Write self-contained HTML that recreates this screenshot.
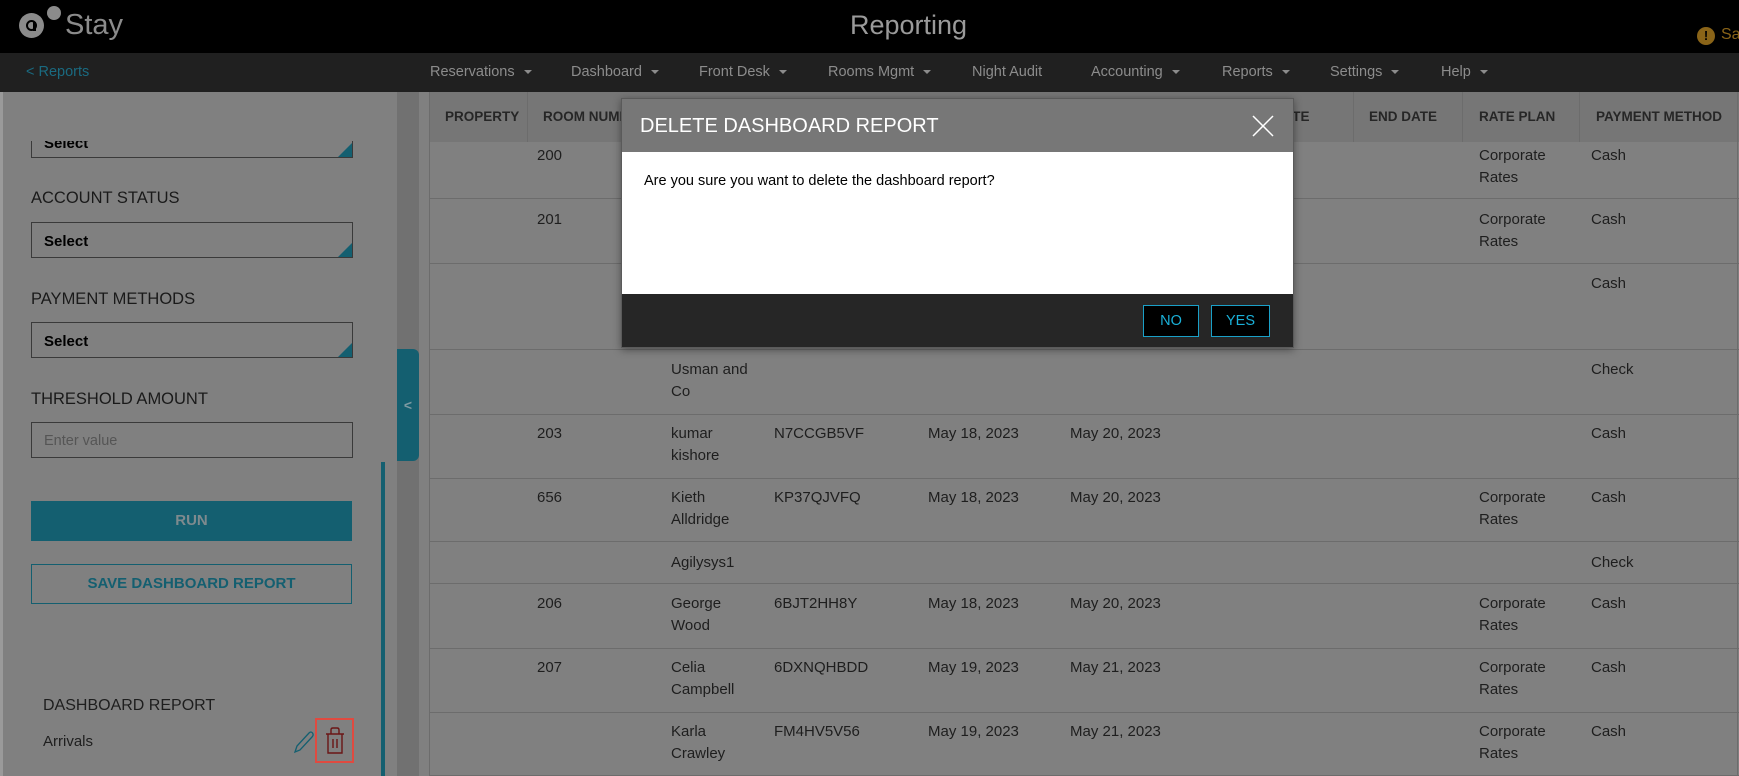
<!DOCTYPE html>
<html><head><meta charset="utf-8"><style>
*{margin:0;padding:0;box-sizing:border-box}
body{width:1739px;height:776px;overflow:hidden;background:#808080;font-family:"Liberation Sans",sans-serif;position:relative}
.a{position:absolute;white-space:nowrap}
.top{left:0;top:0;width:1739px;height:53px;background:#000}
.nav{left:0;top:53px;width:1739px;height:39px;background:#202020}
.ni{top:64px;font-size:14.5px;color:#8c8c8c}
.ni i{display:inline-block;width:0;height:0;border-left:4px solid transparent;border-right:4px solid transparent;border-top:4px solid #8c8c8c;margin-left:9px;vertical-align:middle}
.lbl{left:31px;font-size:16.5px;color:#1a1a1a;font-weight:normal}
.sel{left:31px;width:322px;height:36px;border:1px solid #3a3a3a;font-size:15px;color:#000;font-weight:bold;padding:10px 0 0 12px}
.tri:after{content:"";position:absolute;right:0;bottom:0;border-left:14px solid transparent;border-bottom:14px solid #145f70}
.c{font-size:15px;color:#1e1e1e;line-height:22px;white-space:normal}
.h{top:109px;font-size:13.5px;font-weight:bold;color:#262626}
.rl{left:430px;width:1309px;height:1px;background:#6c6c6c}
.vs{top:92px;width:1px;height:50px;background:#6c6c6c}
</style></head><body>
<div class="a top"></div>
<div class="a" style="left:19px;top:13px;width:25px;height:25px;border-radius:50%;background:#8b8b8b"></div>
<div class="a" style="left:26px;top:20px;width:11px;height:11px;border-radius:50%;border:2.5px solid #000;"></div>
<div class="a" style="left:33px;top:22px;width:3px;height:9px;background:#000"></div>
<div class="a" style="left:47px;top:6px;width:14px;height:14px;border-radius:50%;background:#8b8b8b"></div>
<div class="a" style="left:65px;top:9px;font-size:29px;color:#8b8b8b">Stay</div>
<div class="a" style="left:0;width:1817px;top:10px;text-align:center;font-size:27px;color:#9a9a9a">Reporting</div>
<div class="a" style="left:1697px;top:27px;width:18px;height:18px;border-radius:50%;background:#8a6418;color:#000;font-size:13px;font-weight:bold;text-align:center;line-height:18px">!</div>
<div class="a" style="left:1721px;top:26px;font-size:16px;color:#8a6418">Sa</div>
<div class="a nav"></div>
<div class="a" style="left:26px;top:64px;font-size:14.5px;color:#1a6a80">&lt; Reports</div>
<div class="a ni" style="left:430px">Reservations<i></i></div>
<div class="a ni" style="left:571px">Dashboard<i></i></div>
<div class="a ni" style="left:699px">Front Desk<i></i></div>
<div class="a ni" style="left:828px">Rooms Mgmt<i></i></div>
<div class="a ni" style="left:972px">Night Audit</div>
<div class="a ni" style="left:1091px">Accounting<i></i></div>
<div class="a ni" style="left:1222px">Reports<i></i></div>
<div class="a ni" style="left:1330px">Settings<i></i></div>
<div class="a ni" style="left:1441px">Help<i></i></div>

<!-- left panel -->
<div class="a" style="left:0;top:92px;width:3px;height:684px;background:#9a9a9a"></div>
<div class="a sel tri" style="top:122px;height:36px;overflow:hidden;padding-top:12px">Select</div>
<div class="a" style="left:3px;top:92px;width:394px;height:49px;background:#808080"></div>
<div class="a lbl" style="top:189px">ACCOUNT STATUS</div>
<div class="a sel tri" style="top:222px">Select</div>
<div class="a lbl" style="top:290px">PAYMENT METHODS</div>
<div class="a sel tri" style="top:322px">Select</div>
<div class="a lbl" style="top:390px">THRESHOLD AMOUNT</div>
<div class="a sel" style="top:422px;font-weight:normal;color:#555;font-size:14.5px">Enter value</div>
<div class="a" style="left:31px;top:501px;width:321px;height:40px;background:#145f70;color:#7e8a8e;font-weight:bold;font-size:15px;text-align:center;line-height:40px">RUN</div>
<div class="a" style="left:31px;top:564px;width:321px;height:40px;border:1px solid #145f70;color:#145f70;font-weight:bold;font-size:15px;text-align:center;line-height:38px">SAVE DASHBOARD REPORT</div>
<div class="a" style="left:43px;top:697px;font-size:16px;color:#1e1e1e">DASHBOARD REPORT</div>
<div class="a" style="left:43px;top:733px;font-size:15px;color:#1e1e1e">Arrivals</div>
<svg class="a" style="left:292px;top:730px" width="22" height="24" viewBox="0 0 22 24"><path d="M3 22 L5 16 L17 3 Q19 1 20.5 3 Q22 5 20 7 L8 20 Z" fill="none" stroke="#145f70" stroke-width="1.3"/></svg>
<div class="a" style="left:315px;top:718px;width:39px;height:45px;border:2px solid #e04a40"></div>
<svg class="a" style="left:322px;top:726px" width="26" height="30" viewBox="0 0 26 30"><path d="M4 8 H22 M9 8 V4 Q9 2 11 2 H15 Q17 2 17 4 V8 M6 8 V27 H20 V8 M11 13 V22 M15 13 V22" fill="none" stroke="#6a1515" stroke-width="1.4"/></svg>
<div class="a" style="left:381px;top:462px;width:4px;height:314px;background:#145f70"></div>
<div class="a" style="left:397px;top:92px;width:22px;height:684px;background:#717171"></div>
<div class="a" style="left:397px;top:349px;width:22px;height:112px;background:#145f70;border-radius:0 6px 6px 0;color:#7e9aa2;font-size:14px;font-weight:bold;text-align:center;line-height:112px">&lt;</div>

<!-- table -->
<div class="a" style="left:429px;top:92px;width:1px;height:684px;background:#6c6c6c"></div>
<div class="a" style="left:430px;top:92px;width:1309px;height:50px;background:#767676"></div>
<div class="a vs" style="left:527px"></div><div class="a vs" style="left:1353px"></div><div class="a vs" style="left:1462px"></div><div class="a vs" style="left:1579px"></div><div class="a vs" style="left:1737px;height:684px"></div>
<div class="a h" style="left:445px">PROPERTY</div>
<div class="a h" style="left:543px">ROOM NUMBER</div>
<div class="a h" style="left:1226px">START DATE</div>
<div class="a h" style="left:1369px">END DATE</div>
<div class="a h" style="left:1479px">RATE PLAN</div>
<div class="a h" style="left:1596px">PAYMENT METHOD</div>
<div class="a rl" style="top:198px"></div><div class="a rl" style="top:263px"></div><div class="a rl" style="top:349px"></div><div class="a rl" style="top:414px"></div><div class="a rl" style="top:478px"></div><div class="a rl" style="top:541px"></div><div class="a rl" style="top:583px"></div><div class="a rl" style="top:648px"></div><div class="a rl" style="top:712px"></div><div class="a rl" style="top:775px"></div>

<div class="a c" style="left:537px;top:145px">200</div><div class="a c" style="left:1479px;top:145px;width:90px">Corporate Rates</div><div class="a c" style="left:1591px;top:145px">Cash</div>
<div class="a c" style="left:537px;top:209px">201</div><div class="a c" style="left:1479px;top:209px;width:90px">Corporate Rates</div><div class="a c" style="left:1591px;top:209px">Cash</div>
<div class="a c" style="left:1591px;top:273px">Cash</div>
<div class="a c" style="left:671px;top:359px;width:80px">Usman and Co</div><div class="a c" style="left:1591px;top:359px">Check</div>
<div class="a c" style="left:537px;top:423px">203</div><div class="a c" style="left:671px;top:423px;width:80px">kumar kishore</div><div class="a c" style="left:774px;top:423px">N7CCGB5VF</div><div class="a c" style="left:928px;top:423px">May 18, 2023</div><div class="a c" style="left:1070px;top:423px">May 20, 2023</div><div class="a c" style="left:1591px;top:423px">Cash</div>
<div class="a c" style="left:537px;top:487px">656</div><div class="a c" style="left:671px;top:487px;width:80px">Kieth Alldridge</div><div class="a c" style="left:774px;top:487px">KP37QJVFQ</div><div class="a c" style="left:928px;top:487px">May 18, 2023</div><div class="a c" style="left:1070px;top:487px">May 20, 2023</div><div class="a c" style="left:1479px;top:487px;width:90px">Corporate Rates</div><div class="a c" style="left:1591px;top:487px">Cash</div>
<div class="a c" style="left:671px;top:552px">Agilysys1</div><div class="a c" style="left:1591px;top:552px">Check</div>
<div class="a c" style="left:537px;top:593px">206</div><div class="a c" style="left:671px;top:593px;width:80px">George Wood</div><div class="a c" style="left:774px;top:593px">6BJT2HH8Y</div><div class="a c" style="left:928px;top:593px">May 18, 2023</div><div class="a c" style="left:1070px;top:593px">May 20, 2023</div><div class="a c" style="left:1479px;top:593px;width:90px">Corporate Rates</div><div class="a c" style="left:1591px;top:593px">Cash</div>
<div class="a c" style="left:537px;top:657px">207</div><div class="a c" style="left:671px;top:657px;width:80px">Celia Campbell</div><div class="a c" style="left:774px;top:657px">6DXNQHBDD</div><div class="a c" style="left:928px;top:657px">May 19, 2023</div><div class="a c" style="left:1070px;top:657px">May 21, 2023</div><div class="a c" style="left:1479px;top:657px;width:90px">Corporate Rates</div><div class="a c" style="left:1591px;top:657px">Cash</div>
<div class="a c" style="left:671px;top:721px;width:80px">Karla Crawley</div><div class="a c" style="left:774px;top:721px">FM4HV5V56</div><div class="a c" style="left:928px;top:721px">May 19, 2023</div><div class="a c" style="left:1070px;top:721px">May 21, 2023</div><div class="a c" style="left:1479px;top:721px;width:90px">Corporate Rates</div><div class="a c" style="left:1591px;top:721px">Cash</div>

<!-- modal -->
<div class="a" style="left:621px;top:98px;width:673px;height:250px;border:1px solid #5a5a5a;box-shadow:0 2px 8px rgba(0,0,0,.4)">
  <div style="height:53px;background:#777;position:relative">
    <div class="a" style="left:18px;top:16px;font-size:20px;color:#fff">DELETE DASHBOARD REPORT</div>
    <svg class="a" style="left:630px;top:16px" width="22" height="22"><path d="M1 1 L21 21 M21 1 L1 21" stroke="#fff" stroke-width="1.5"/></svg>
  </div>
  <div style="height:142px;background:#fff;position:relative">
    <div class="a" style="left:22px;top:21px;font-size:14.5px;color:#000">Are you sure you want to delete the dashboard report?</div>
  </div>
  <div style="height:53px;background:#262626;position:relative">
    <div class="a" style="left:521px;top:11px;width:56px;height:32px;background:#000;border:1px solid #1aa0c8;color:#1ab0d8;font-size:14.5px;text-align:center;line-height:30px">NO</div>
    <div class="a" style="left:589px;top:11px;width:59px;height:32px;background:#000;border:1px solid #1aa0c8;color:#1ab0d8;font-size:14.5px;text-align:center;line-height:30px">YES</div>
  </div>
</div>
</body></html>
